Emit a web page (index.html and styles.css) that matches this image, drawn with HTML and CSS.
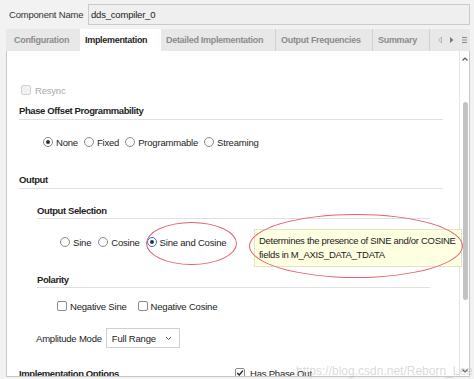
FILE: index.html
```html
<!DOCTYPE html>
<html lang="en">
<head>
  <meta charset="UTF-8">
  <title>dds_compiler_0</title>
  <link rel="stylesheet" href="styles.css">
</head>
<body>
  <div class="name-row">
    <span class="name-label">Component Name</span>
    <div class="name-input">dds_compiler_0</div>
  </div>

  <div class="dialog">
    <div class="tabs">
      <div class="tab tab-config">Configuration</div>
      <div class="tab tab-impl active">Implementation</div>
      <div class="tab tab-detail">Detailed Implementation</div>
      <div class="tab tab-freq">Output Frequencies</div>
      <div class="tab tab-summary">Summary</div>
      <div class="tab-tools">
        <svg width="40" height="22" viewBox="0 0 40 22">
          <path d="M11.5 8 L8.5 11 L11.5 14 Z" fill="none" stroke="#b4b4b4" stroke-width="1"/>
          <path d="M20 8 L23.5 11 L20 14 Z" fill="#7a7a7a"/>
          <path d="M32 8.5 H37 M32 11 H37 M32 13.5 H37" stroke="#8a8a8a" stroke-width="1"/>
        </svg>
      </div>
    </div>

    <div class="panel">
      <div class="content">
        <div class="row resync">
          <span class="check disabled"></span>
          <span>Resync</span>
        </div>

        <div class="section-title">Phase Offset Programmability</div>
        <div class="row options phase">
          <span class="opt"><span class="radio on"></span>None</span>
          <span class="opt"><span class="radio"></span>Fixed</span>
          <span class="opt"><span class="radio"></span>Programmable</span>
          <span class="opt"><span class="radio"></span>Streaming</span>
        </div>

        <div class="section-title output">Output</div>
        <div class="sub">
          <div class="sub-title">Output Selection</div>
          <div class="row options outsel">
            <span class="opt"><span class="radio"></span>Sine</span>
            <span class="opt"><span class="radio"></span>Cosine</span>
            <span class="opt"><span class="radio on focus"></span>Sine and Cosine</span>
          </div>

          <div class="sub-title polarity">Polarity</div>
          <div class="row options pol">
            <span class="opt"><span class="check"></span>Negative Sine</span>
            <span class="opt"><span class="check"></span>Negative Cosine</span>
          </div>
        </div>

        <div class="row amp">
          <span>Amplitude Mode</span>
          <div class="select">
            <span>Full Range</span>
            <svg width="7" height="5" viewBox="0 0 7 5">
              <path d="M1 1 L3.5 3.5 L6 1" fill="none" stroke="#555" stroke-width="1"/>
            </svg>
          </div>
        </div>

        <div class="row impl">
          <span class="impl-title">Implementation Options</span>
          <span class="opt">
            <span class="check on">
              <svg width="8" height="8" viewBox="0 0 8 8">
                <path d="M1.2 4 L3.2 6 L7 1.6" fill="none" stroke="#222" stroke-width="1.4"/>
              </svg>
            </span>Has Phase Out
          </span>
        </div>
      </div>

      <div class="scrollbar">
        <svg width="6" height="4" viewBox="0 0 6 4">
          <path d="M0.5 3.5 L3 1 L5.5 3.5" fill="none" stroke="#555" stroke-width="1.1"/>
        </svg>
        <div class="thumb"></div>
        <svg class="down" width="6" height="4" viewBox="0 0 6 4">
          <path d="M0.5 0.5 L3 3 L5.5 0.5" fill="none" stroke="#555" stroke-width="1.1"/>
        </svg>
      </div>

      <div class="tooltip">Determines the presence of SINE and/or COSINE<br>fields in M_AXIS_DATA_TDATA</div>
      <div class="ring ring-radio"></div>
      <div class="ring ring-tip"></div>
      <div class="watermark">https://blog.csdn.net/Reborn_Lee</div>
    </div>
  </div>
</body>
</html>
```

FILE: styles.css
```css
* {
  box-sizing: border-box;
}

body {
  margin: 0;
  width: 474px;
  height: 379px;
  overflow: hidden;
  background: #f2f2f2;
  font-family: "Liberation Sans", Arial, sans-serif;
  font-size: 9.5px;
  letter-spacing: -0.2px;
  color: #222;
}

/* component name */
.name-row {
  display: flex;
  align-items: center;
  height: 29px;
  padding: 4px 4px 4px 9px;
}

.name-label {
  width: 79px;
  color: #333;
}

.name-input {
  flex: 1;
  height: 21px;
  line-height: 19px;
  padding-left: 2px;
  background: #efefef;
  border: 1px solid #cbcbcb;
}

/* tabs */
.dialog {
  margin-left: 6px;
  width: 464px;
}

.tabs {
  display: flex;
  height: 22px;
  background: #e8e8e8;
  font-size: 9px;
  font-weight: bold;
  letter-spacing: -0.3px;
  color: #8c8c8c;
}

.tab {
  line-height: 22px;
  padding-left: 5px;
  white-space: nowrap;
  overflow: hidden;
}

.tab-config { width: 74px; padding-left: 8px; }
.tab-impl { width: 81px; }
.tab-detail { width: 115px; border-right: 1px solid #d0d0d0; }
.tab-freq { width: 97px; border-right: 1px solid #d0d0d0; }
.tab-summary { width: 57px; border-right: 1px solid #d0d0d0; }

.tab.active {
  background: #fff;
  color: #1e1e1e;
}

.tab-tools {
  flex: 1;
  display: flex;
}

/* panel */
.panel {
  position: relative;
  display: flex;
  height: 326px;
  background: #fff;
  border: 1px solid #c8c8c8;
  border-top: none;
}

.content {
  flex: 1;
  overflow: hidden;
  padding: 29px 16px 0 12px;
}

.row {
  display: flex;
  align-items: center;
  height: 20px;
  white-space: nowrap;
}

.resync {
  padding-left: 2px;
  gap: 4px;
  color: #a9a9a9;
}

.section-title {
  margin-top: 4px;
  line-height: 14px;
  padding-bottom: 1px;
  border-bottom: 1px solid #e0e0e0;
  font-weight: bold;
  letter-spacing: -0.4px;
  color: #1e1e1e;
}

.section-title.output {
  margin-top: 21px;
}

.sub {
  margin: 0 13px 0 18px;
}

.sub-title {
  margin-top: 15px;
  line-height: 14px;
  border-bottom: 1px solid #e0e0e0;
  font-weight: bold;
  letter-spacing: -0.4px;
  color: #1e1e1e;
}

.sub-title.polarity {
  margin-top: 21px;
}

.opt {
  display: inline-flex;
  align-items: center;
  gap: 3px;
  margin-right: 6px;
}

.phase { margin-top: 12px; padding-left: 24px; }
.outsel { margin-top: 13px; padding-left: 23px; }
.outsel .opt { margin-right: 7px; }
.pol { margin-top: 8px; padding-left: 20px; }
.pol .opt { margin-right: 11px; }

.radio {
  width: 10px;
  height: 10px;
  border: 1px solid #8a8a8a;
  border-radius: 50%;
  background: #fff;
  display: flex;
  align-items: center;
  justify-content: center;
}

.radio.on::after {
  content: "";
  width: 4px;
  height: 4px;
  border-radius: 50%;
  background: #333;
}

.radio.focus {
  border: 1.5px solid #2c6bd0;
}

.check {
  width: 10px;
  height: 10px;
  border: 1px solid #8a8a8a;
  border-radius: 2px;
  background: #fff;
  display: flex;
  align-items: center;
  justify-content: center;
}

.check.disabled {
  border-color: #d2d2d2;
  background: #f1f1f1;
}

.amp {
  margin-top: 12px;
  padding-left: 17px;
  gap: 4px;
}

.select {
  width: 74px;
  height: 20px;
  display: flex;
  align-items: center;
  justify-content: space-between;
  padding: 0 7px 0 5px;
  border: 1px solid #d0d0d0;
  background: #fff;
}

.impl {
  margin-top: 15px;
  display: grid;
  grid-template-columns: 216px auto;
}

.impl-title {
  font-weight: bold;
  letter-spacing: -0.4px;
  color: #1e1e1e;
}

.impl .opt {
  gap: 5px;
}

/* scrollbar */
.scrollbar {
  width: 10px;
  display: flex;
  flex-direction: column;
  align-items: center;
  padding: 6px 0 3px 1px;
  border-left: 1px solid #e4e4e4;
}

.thumb {
  margin-top: 41px;
  width: 5px;
  height: 198px;
  border-radius: 3px;
  background: #c3c3c3;
}

.scrollbar .down {
  margin-top: auto;
}

/* overlays */
.tooltip {
  position: absolute;
  left: 247px;
  top: 178px;
  width: 208px;
  height: 38px;
  padding: 4px 4px 0 4px;
  line-height: 14px;
  letter-spacing: -0.3px;
  background: #ffffe1;
  border: 1px solid #e4e4c4;
  white-space: nowrap;
}

.ring {
  position: absolute;
  border: 1.2px solid #e2606c;
  border-radius: 50%;
}

.ring-radio {
  left: 139px;
  top: 171px;
  width: 91px;
  height: 43px;
}

.ring-tip {
  left: 242px;
  top: 163px;
  width: 214px;
  height: 64px;
}

.watermark {
  position: absolute;
  left: 289px;
  top: 313px;
  font-size: 12px;
  line-height: 14px;
  letter-spacing: 0;
  color: rgba(170, 170, 170, 0.45);
}
```
